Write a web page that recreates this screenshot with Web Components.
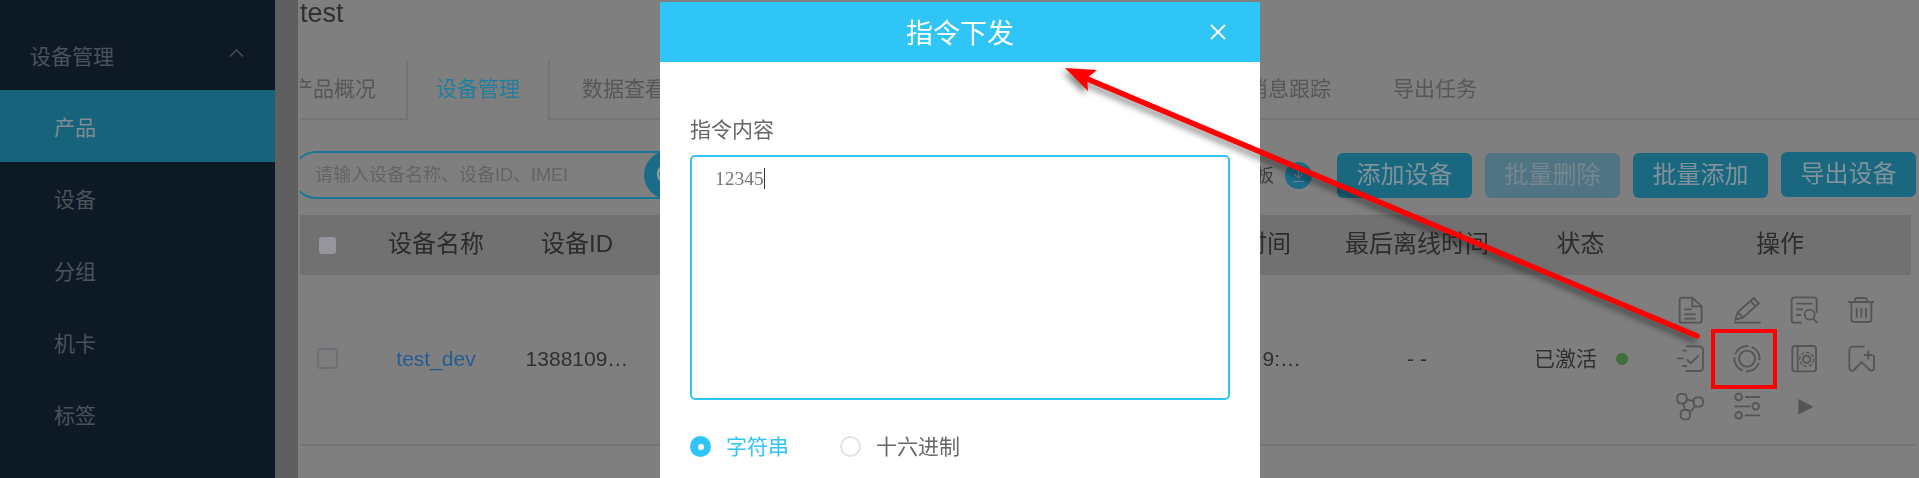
<!DOCTYPE html>
<html lang="zh">
<head>
<meta charset="utf-8">
<title>指令下发</title>
<style>
  html, body { margin: 0; height: 478px; overflow: hidden; }
  body {
    display: flex;
    position: relative;
    background: #7f7f7f;
    font-family: "Liberation Sans", "Noto Sans CJK SC", sans-serif;
  }
  .dimmed { display: flex; flex: 1; min-width: 0; filter: blur(.3px); }
</style>
</head>
<body>
  <div class="dimmed">
    <side-nav>
      <nav-item>产品</nav-item>
      <nav-item>设备</nav-item>
      <nav-item>分组</nav-item>
      <nav-item>机卡</nav-item>
      <nav-item>标签</nav-item>
    </side-nav>
    <device-panel></device-panel>
  </div>
  <command-dialog></command-dialog>
  <mark-up></mark-up>

<script>
// Colours are the ones seen under the dialog's backdrop, so there is no scrim element

class SideNav extends HTMLElement {
  constructor() {
    super();
    this.attachShadow({ mode: "open" });
    this.shadowRoot.innerHTML = `
      <style>
        :host { display: block; flex: none; width: 275px; height: 478px; background: #0e1926; overflow: hidden; }
        .head {
          display: flex; align-items: center; justify-content: space-between;
          box-sizing: border-box; height: 90px; padding: 19px 31px 0 30px;
          color: #4a525c; font-size: 21px;
        }
        svg { width: 15px; height: 8px; margin-top: -3px; }
      </style>
      <div class="head">
        <span>设备管理</span>
        <svg viewBox="0 0 15 8"><path d="M1 7.5 7.5 1 14 7.5" fill="none" stroke="#4a525c" stroke-width="1.3"/></svg>
      </div>
      <slot></slot>
    `;
  }

  connectedCallback() {
    this.querySelector("nav-item").setAttribute("active", "");
  }
}

class NavItem extends HTMLElement {
  constructor() {
    super();
    this.attachShadow({ mode: "open" });
    this.shadowRoot.innerHTML = `
      <style>
        :host {
          display: flex; align-items: center;
          box-sizing: border-box; height: 72px; padding: 0 0 1px 54px;
          color: #4a525c; font-size: 21px;
        }
        :host([active]) { background: #17637b; color: #7f8d95; }
      </style>
      <slot></slot>
    `;
  }
}

class DevicePanel extends HTMLElement {
  constructor() {
    super();
    this.attachShadow({ mode: "open" });
    this.shadowRoot.innerHTML = `
      <style>
        :host {
          display: block; flex: 1; min-width: 0; height: 478px;
          border-left: 23px solid #5f5f5f;
          padding-left: 2px;
          color: #2e2e2e;
        }
        .clip { height: 100%; overflow: hidden; }
        h1 {
          margin: -2px 0 0; height: 62px;
          font-size: 27px; line-height: 30px; font-weight: 400; color: #303030;
        }
      </style>
      <div class="clip">
        <h1>test</h1>
        <tab-bar></tab-bar>
        <device-toolbar></device-toolbar>
        <device-table></device-table>
      </div>
    `;
  }
}

class TabBar extends HTMLElement {
  constructor() {
    super();
    this.attachShadow({ mode: "open" });
    this.shadowRoot.innerHTML = `
      <style>
        :host {
          display: flex; height: 58px;
          margin-left: -38px;
          border-bottom: 2px solid #74747b;
          font-size: 21px; color: #57575b;
        }
        span {
          display: flex; align-items: center; justify-content: center;
          box-sizing: border-box; width: 144px; height: 58px;
          padding-bottom: 4px;
        }
        .on {
          height: 60px; padding-bottom: 6px; color: #1f7f9f; background: #7f7f7f;
          border: solid #74747b; border-width: 0 2px;
        }
        .third { padding-left: 4px; }
        .skip { width: 523px; }
        .last { margin-left: 2px; }
      </style>
      <span>产品概况</span>
      <span class="on">设备管理</span>
      <span class="third">数据查看</span>
      <span class="skip"></span>
      <span>消息跟踪</span>
      <span class="last">导出任务</span>
    `;
  }
}

class ActionButton extends HTMLElement {
  constructor() {
    super();
    this.attachShadow({ mode: "open" });
    this.shadowRoot.innerHTML = `
      <style>
        :host {
          display: flex; align-items: center; justify-content: center;
          box-sizing: border-box; flex: none; width: 135px; height: 45px;
          padding-bottom: 5px;
          border-radius: 6px;
          background: #196880; color: #80929b;
          font-size: 24px;
        }
        :host([disabled]) { background: #507484; color: #74878f; }
      </style>
      <slot></slot>
    `;
  }
}

class DeviceToolbar extends HTMLElement {
  constructor() {
    super();
    this.attachShadow({ mode: "open" });
    this.shadowRoot.innerHTML = `
      <style>
        :host {
          display: flex; align-items: center;
          height: 48px; margin-top: 31px; padding-right: 3px;
        }
        .search {
          display: flex; align-items: center; flex: none;
          box-sizing: border-box; width: 400px; height: 48px;
          margin-left: -8px;
          border: 2px solid #1c7797; border-radius: 24px;
          padding-left: 21px;
          color: #626468; font-size: 18px;
        }
        .search span { flex: 1; padding-bottom: 4px; }
        .go {
          display: flex; align-items: center; justify-content: center;
          flex: none; width: 48px; height: 48px; margin-right: -2px;
          border-radius: 50%; background: #1a6c89;
        }
        .tpl { margin-left: auto; font-size: 18px; color: #3c3c3c; padding-bottom: 3px; }
        .down {
          display: flex; align-items: center; justify-content: center;
          width: 27px; height: 27px; margin: 0 25px 0 11px;
          border-radius: 50%; background: #1a6c89;
        }
        action-button + action-button { margin-left: 13px; }
        action-button:last-child { margin-top: -2px; }
      </style>
      <div class="search">
        <span>请输入设备名称、设备ID、IMEI</span>
        <div class="go">
          <svg width="28" height="28" viewBox="0 0 28 28" fill="none" stroke="#8a9aa3" stroke-width="2.5"><circle cx="13" cy="13" r="9"/><path d="m20 20 5 5"/></svg>
        </div>
      </div>
      <span class="tpl">模板</span>
      <div class="down">
        <svg width="17" height="17" viewBox="0 0 17 17" fill="none" stroke="#73858e" stroke-width="1.2"><path d="M8.5 3v7M4.500 7l4 4 4-4M3 14.500h11"/></svg>
      </div>
      <action-button>添加设备</action-button>
      <action-button disabled>批量删除</action-button>
      <action-button>批量添加</action-button>
      <action-button>导出设备</action-button>
    `;
  }
}

class DeviceTable extends HTMLElement {
  constructor() {
    super();
    this.attachShadow({ mode: "open" });
    this.shadowRoot.innerHTML = `
      <style>
        :host { display: block; width: 1615px; margin-top: 16px; }
        .row {
          display: grid;
          grid-template-columns: 56px 160px 122px 704px 150px 169px 254px;
          align-items: center; justify-items: center;
        }
        .head { height: 60px; margin-right: 4px; background: #717171; font-size: 24px; color: #2c2c2c; }
        .head div:not(.box) { padding-bottom: 7px; }
        .body { height: 169px; box-sizing: content-box; border-bottom: 2px solid #74747a; font-size: 21px; color: #303030; }
        .body > * { margin-bottom: 2px; }
        .box { box-sizing: border-box; border-radius: 3px; }
        .head .box { width: 17px; height: 17px; margin-left: -1px; background: #95959b; }
        .body .box { width: 21px; height: 21px; margin-left: -1px; border: 2px solid #6f6f78; }
        .head .wide { justify-self: end; padding-right: 51px; }
        .body .wide { justify-self: end; padding-right: 41px; }
        .link { color: #255c90; }
        .state { display: flex; align-items: center; gap: 19px; padding-left: 9px; }
        .state b { font-weight: 400; margin-bottom: 4px; }
        .dot { width: 12px; height: 12px; border-radius: 50%; background: #3f6f3a; }
        .head .pad { padding-left: 8px; }
        .head .ops { padding-right: 16px; }
      </style>
      <div class="row head">
        <div class="box"></div>
        <div>设备名称</div>
        <div>设备ID</div>
        <div class="wide">时间</div>
        <div>最后离线时间</div>
        <div class="pad">状态</div>
        <div class="ops">操作</div>
      </div>
      <div class="row body">
        <div class="box"></div>
        <div class="link">test_dev</div>
        <div>1388109…</div>
        <div class="wide">9:…</div>
        <div>- -</div>
        <div class="state"><b>已激活</b><span class="dot"></span></div>
        <row-actions style="justify-self:start"></row-actions>
      </div>
    `;
  }
}

// Icon paths are written in a 3x space, one 90x90 window around each grid cell's centre
const rowIcons = [
  [145, 92, `<path d="M120 55h32l28 26v43a6 6 0 0 1-6 6h-54a6 6 0 0 1-6-6V61a6 6 0 0 1 6-6z"/><path d="M152 55v26h28M128 90h22M128 105h34M128 118h34"/>`],
  [316, 92, `<path d="M277 130h80M281 121l7-22 48-43 15 16-47 43zM326 65l16 17M288 99l16 16"/>`],
  [487, 92, `<path d="M525 100V62a8 8 0 0 0-8-8h-59a8 8 0 0 0-8 8v60a8 8 0 0 0 8 8h22M464 73h48M464 90h20M464 107h14M515 118l12 13"/><circle cx="504" cy="106" r="15"/>`],
  [658, 92, `<path d="M620 68h77M640 67v-5a6 6 0 0 1 6-6h24a6 6 0 0 1 6 6v5M629 70v50a8 8 0 0 0 8 8h44a8 8 0 0 0 8-8V70M645 85v30M659 85v30M673 85v30"/>`],
  [145, 237, `<path d="M132 199h42a10 10 0 0 1 10 10v54a10 10 0 0 1-10 10h-42M122 212h14M106 235h20M122 258h14M136 238l11 12 24-24"/>`],
  [316, 237, `<circle cx="316" cy="236" r="24"/><circle cx="316" cy="236" r="38" stroke-dasharray="50 9.700" transform="rotate(20 316 236)"/>`],
  [487, 237, `<rect x="452" y="198" width="71" height="76" rx="8"/><path d="M468 198v76"/><circle cx="495" cy="238" r="11"/><circle cx="495" cy="238" r="21" stroke-width="4" stroke-dasharray="11 5"/>`],
  [658, 237, `<path d="M668 200h-34a11 11 0 0 0-11 11v51c0 10 8 13 14 8l23-24 24 24c6 5 13 2 13-8v-37M680 212v26M667 225h26"/>`],
  [145, 382, `<rect x="107" y="343" width="28" height="28" rx="10"/><rect x="156" y="353" width="28" height="28" rx="10"/><rect x="117" y="391" width="28" height="28" rx="10"/><path d="M135 360l21 4M124 371l7 20M146 395l14-14"/>`],
  [316, 382, `<circle cx="291" cy="352" r="10"/><circle cx="342" cy="380" r="10"/><circle cx="291" cy="407" r="10"/><path d="M310 352h45M279 380h46M310 407h45"/>`],
  [487, 382, `<path d="M470 358l45 23-45 24z" fill="#555" stroke="none"/>`],
];

class RowActions extends HTMLElement {
  constructor() {
    super();
    this.attachShadow({ mode: "open" });
    const cells = rowIcons.map(([cx, cy, body]) => `
      <svg viewBox="${cx - 45} ${cy - 45} 90 90" fill="none" stroke="#555" stroke-width="5.500">${body}</svg>
    `).join("");
    this.shadowRoot.innerHTML = `
      <style>
        :host {
          display: grid;
          grid-template-columns: repeat(4, 57px);
          grid-auto-rows: 48.25px;
          place-items: center;
        }
        svg { width: 30px; height: 30px; }
      </style>
      ${cells}
    `;
  }
}

class CommandDialog extends HTMLElement {
  constructor() {
    super();
    this.attachShadow({ mode: "open" });
    this.shadowRoot.innerHTML = `
      <style>
        :host {
          position: absolute; left: 660px; top: 2px;
          width: 600px; height: 476px;
          background: #fff; color: #666;
          filter: blur(.25px);
        }
        header {
          display: flex; align-items: center; justify-content: center;
          position: relative; box-sizing: border-box; height: 60px; padding-bottom: 2px;
          background: #2fc6f7; color: #fff; font-size: 27px;
        }
        header svg { position: absolute; right: 34px; top: 22px; }
        .body { padding: 56px 30px 0; }
        label { display: block; font-size: 21px; line-height: 24px; color: #666; }
        .area {
          box-sizing: border-box; height: 245px; margin-top: 13px;
          padding: 7px 23px;
          border: 2px solid #2fc6f7; border-radius: 5px;
          font: 19.500px/29px "Liberation Serif", "Noto Sans CJK SC", serif; color: #777;
        }
        .caret { border-right: 1px solid #333; }
        .kind {
          display: flex; align-items: center;
          margin-top: 36px; height: 21px;
          font-size: 21px; color: #666;
        }
        .kind span { margin-bottom: 4px; }
        i { box-sizing: border-box; width: 21px; height: 21px; margin-right: 15px; border-radius: 50%; }
        .on {
          display: flex; align-items: center; justify-content: center;
          background: #2fc6f7;
        }
        .on::after { content: ""; width: 6px; height: 6px; border-radius: 50%; background: #fff; }
        .off { margin-left: 51px; border: 2px solid #e2e2ea; }
        .sel { color: #2fc6f7; }
      </style>
      <header>
        指令下发
        <svg width="16" height="16" viewBox="0 0 16 16"><path d="M1 1l14 14M15 1 1 15" stroke="#fff" stroke-width="1.800"/></svg>
      </header>
      <div class="body">
        <label>指令内容</label>
        <div class="area"><span class="caret">12345</span></div>
        <div class="kind">
          <i class="on"></i><span class="sel">字符串</span>
          <i class="off"></i><span>十六进制</span>
        </div>
      </div>
    `;
  }
}

// Red annotation drawn over the whole screenshot
class MarkUp extends HTMLElement {
  constructor() {
    super();
    this.attachShadow({ mode: "open" });
    this.shadowRoot.innerHTML = `
      <style>
        :host { position: absolute; left: 0; top: 0; width: 1919px; height: 478px; pointer-events: none; }
        svg { display: block; }
        .arrow { filter: drop-shadow(-3px 4px 3px rgba(0, 0, 0, .45)); }
      </style>
      <svg width="1919" height="478" viewBox="0 0 1919 478">
        <g class="arrow">
          <path d="M1085 78 1697 336" stroke="#f00" stroke-width="5.500" stroke-linecap="round"/>
          <path d="M1065 68 1097 70 1087 78 1088 91z" fill="#f00"/>
        </g>
        <rect x="1713" y="331" width="62" height="56" fill="none" stroke="#f00" stroke-width="4"/>
      </svg>
    `;
  }
}

customElements.define("nav-item", NavItem);
customElements.define("side-nav", SideNav);
customElements.define("tab-bar", TabBar);
customElements.define("action-button", ActionButton);
customElements.define("device-toolbar", DeviceToolbar);
customElements.define("row-actions", RowActions);
customElements.define("device-table", DeviceTable);
customElements.define("device-panel", DevicePanel);
customElements.define("command-dialog", CommandDialog);
customElements.define("mark-up", MarkUp);
</script>
</body>
</html>
